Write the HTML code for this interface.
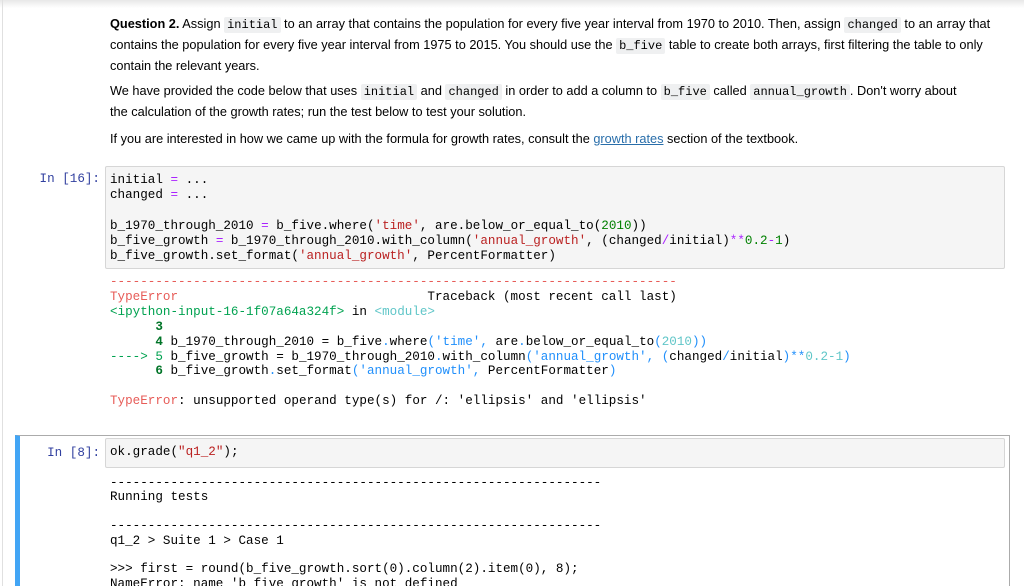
<!DOCTYPE html>
<html><head><meta charset="utf-8"><style>
html,body{margin:0;width:1024px;height:586px;overflow:hidden;}
body{background:#fff;position:relative;font-family:"Liberation Sans",sans-serif;}
.p{position:absolute;left:110px;font-size:12.75px;line-height:19px;color:#000;width:900px;margin:0}
code{font-family:"Liberation Mono",monospace;font-size:12px;background:#eff0f1;padding:1px 3px;border-radius:2px}
a{color:#296eaa;text-decoration:underline}
pre{position:absolute;margin:0;font-family:"Liberation Mono",monospace;font-size:12.6px;line-height:14.9px;color:#000;left:110px}
.box{position:absolute;left:105px;width:898px;background:#f5f5f5;border:1px solid #d6d6d6;border-radius:2px}
.pr{position:absolute;font-family:"Liberation Mono",monospace;font-size:12.6px;color:#303f9f;text-align:right;width:100px;left:0}
.o{color:#aa22ff}.s{color:#ba2121}.n{color:#008000}
.r{color:#e75c58}.g{color:#00a250}.c{color:#60c6c8}.b{color:#208ffb}.gb{color:#007427;font-weight:bold}
</style></head><body>
<div style="position:absolute;left:0;top:0;width:1024px;height:8px;background:linear-gradient(#e8e8e8,#fff)"></div>
<div style="position:absolute;left:2px;top:0;width:1px;height:586px;background:#e0e0e0"></div>
<p class="p" style="top:14px"><b>Question 2.</b> Assign <code>initial</code> to an array that contains the population for every five year interval from 1970 to 2010. Then, assign <code>changed</code> to an array that contains the population for every five year interval from 1975 to 2015. You should use the <code>b_five</code> table to create both arrays, first filtering the table to only contain the relevant years.</p>
<p class="p" style="top:81px;width:850px">We have provided the code below that uses <code>initial</code> and <code>changed</code> in order to add a column to <code>b_five</code> called <code>annual_growth</code>. Don't worry about the calculation of the growth rates; run the test below to test your solution.</p>
<p class="p" style="top:129px">If you are interested in how we came up with the formula for growth rates, consult the <a>growth rates</a> section of the textbook.</p>

<div class="pr" style="top:172px">In [16]:</div>
<div class="box" style="top:166px;height:101px"></div>
<pre style="top:173px;line-height:15.2px">initial <span class="o">=</span> ...
changed <span class="o">=</span> ...

b_1970_through_2010 <span class="o">=</span> b_five.where(<span class="s">'time'</span>, are.below_or_equal_to(<span class="n">2010</span>))
b_five_growth <span class="o">=</span> b_1970_through_2010.with_column(<span class="s">'annual_growth'</span>, (changed<span class="o">/</span>initial)<span class="o">**</span><span class="n">0.2</span><span class="o">-</span><span class="n">1</span>)
b_five_growth.set_format(<span class="s">'annual_growth'</span>, PercentFormatter)</pre>

<pre style="top:275px"><span class="r">---------------------------------------------------------------------------</span>
<span class="r">TypeError</span>                                 Traceback (most recent call last)
<span class="g">&lt;ipython-input-16-1f07a64a324f&gt;</span> in <span class="c">&lt;module&gt;</span>
<span class="gb">      3</span> 
<span class="gb">      4</span> b_1970_through_2010 = b_five<span class="b">.</span>where<span class="b">('time',</span> are<span class="b">.</span>below_or_equal_to<span class="b">(</span><span class="c">2010</span><span class="b">))</span>
<span class="g">----&gt; 5</span> b_five_growth = b_1970_through_2010<span class="b">.</span>with_column<span class="b">('annual_growth',</span> <span class="b">(</span>changed<span class="b">/</span>initial<span class="b">)**</span><span class="c">0.2-1</span><span class="b">)</span>
<span class="gb">      6</span> b_five_growth<span class="b">.</span>set_format<span class="b">('annual_growth',</span> PercentFormatter<span class="b">)</span>

<span class="r">TypeError</span>: unsupported operand type(s) for /: 'ellipsis' and 'ellipsis'</pre>

<div style="position:absolute;left:15px;top:435px;width:995px;height:151px;border:1px solid #ababab;border-bottom:none;border-left:5px solid #42a5f5;box-sizing:border-box"></div>
<div class="pr" style="top:446px">In [8]:</div>
<div class="box" style="top:438px;height:28px"></div>
<pre style="top:445px">ok.grade(<span class="s">"q1_2"</span>);</pre>
<pre style="top:476px;line-height:14.4px">-----------------------------------------------------------------
Running tests

-----------------------------------------------------------------
q1_2 &gt; Suite 1 &gt; Case 1

&gt;&gt;&gt; first = round(b_five_growth.sort(0).column(2).item(0), 8);</pre>
<pre style="top:577px;height:9px;overflow:hidden;line-height:14.4px">NameError: name 'b_five_growth' is not defined</pre>
</body></html>
